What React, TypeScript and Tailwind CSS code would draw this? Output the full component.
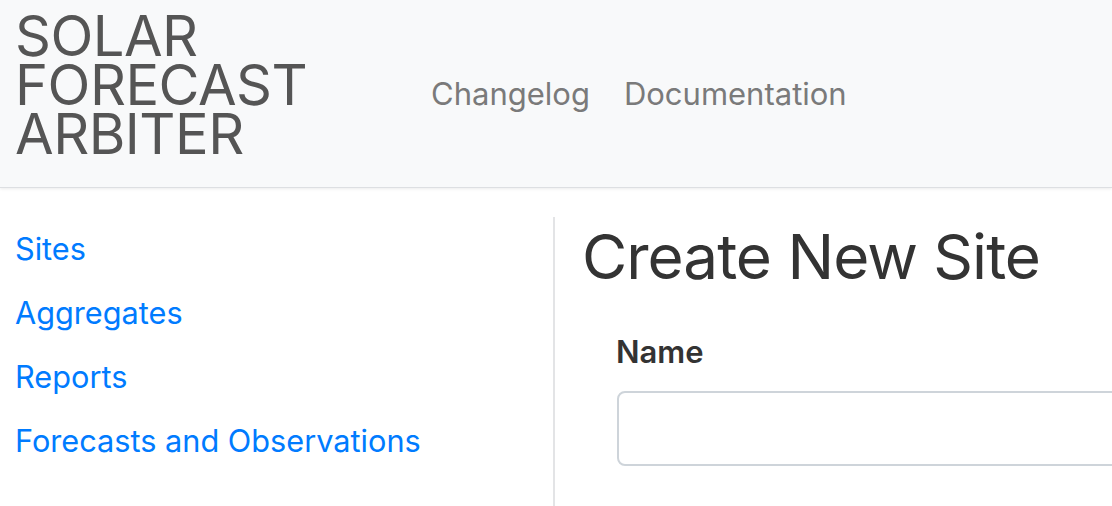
export default function App() {
  return (
    <div
      className="w-[1112px] h-[506px] overflow-hidden bg-white"
      style={{ fontFamily: 'Inter, "Noto Sans", sans-serif' }}
    >
      <header className="h-[188px] bg-[#f8f9fa] border-b border-[#dddfe2] shadow-[0_1px_3px_rgba(0,0,0,0.08)] flex">
        <div className="pl-[15px] w-[431px] shrink-0 pt-[12px] text-[56px] leading-[49px] text-[#555555] tracking-[-0.5px]">
          SOLAR
          <br />
          FORECAST
          <br />
          ARBITER
        </div>
        <nav className="flex items-center gap-[34px] text-[31px] text-[#7a7a7a] mt-[2px]">
          <a>Changelog</a>
          <a>Documentation</a>
        </nav>
      </header>
      <div className="flex pt-[31px]">
        <aside className="w-[555px] shrink-0 pl-[15px] border-r-2 border-[#e3e4e6] h-[300px] -mt-[2px] pt-[14px] flex flex-col gap-[28px] text-[30.7px] leading-[36px] text-[#007bff]">
          <a>Sites</a>
          <a>Aggregates</a>
          <a>Reports</a>
          <a>Forecasts and Observations</a>
        </aside>
        <main className="flex-1 pl-[27px] -mt-[2px]">
          <h2 className="text-[62px] leading-[80px] text-[#333333] tracking-[-1px]">Create New Site</h2>
          <div className="pl-[35px] pt-[37px]">
            <label className="block text-[31px] font-semibold text-[#333333] leading-[36px] -ml-[1px]">Name</label>
            <input className="mt-[21px] w-[600px] h-[75px] border-2 border-[#ced4da] rounded-[8px] bg-white" />
          </div>
        </main>
      </div>
    </div>
  );
}
